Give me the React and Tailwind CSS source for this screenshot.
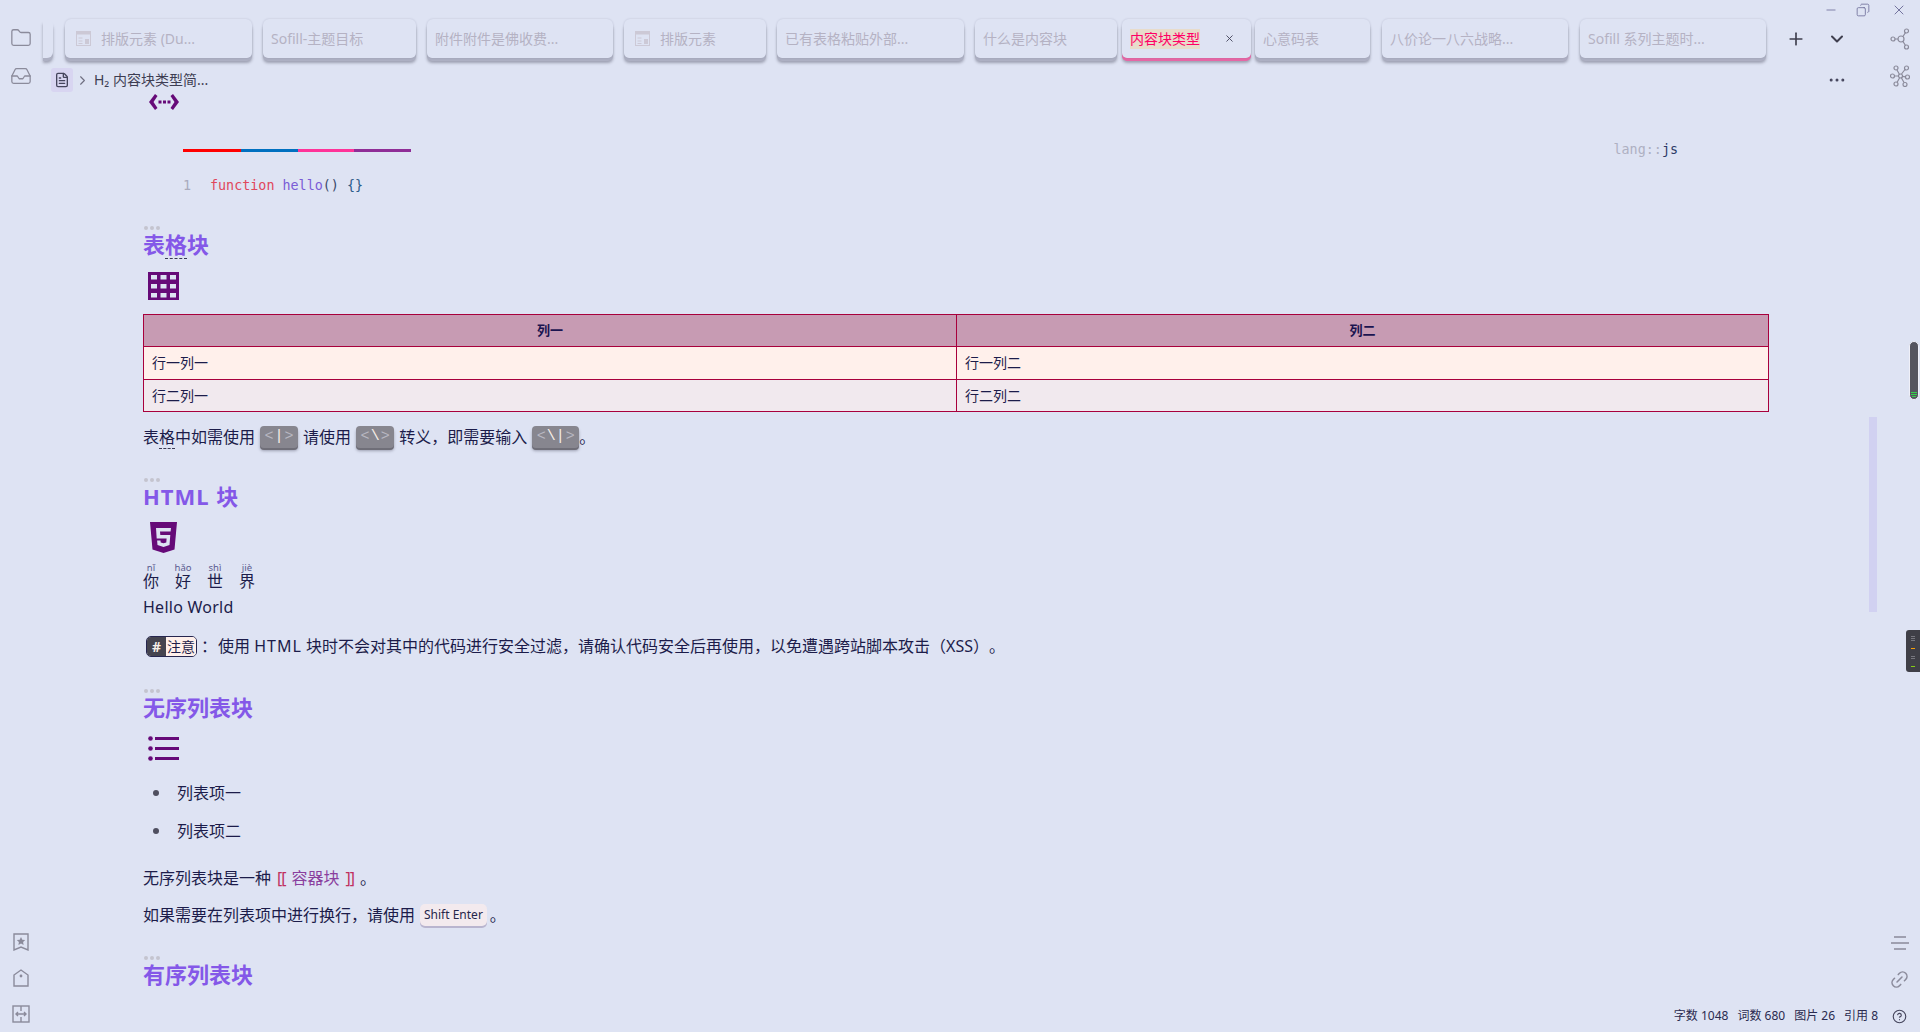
import { Folder, Inbox, FileText, ChevronRight, ChevronDown, Plus, Minus, X, Ellipsis, Link2, CircleHelp, Copy } from 'lucide-react'

const tabs = [
  { title: '排版元素 (Du...', w: 'w-[187px]', doc: true },
  { title: 'Sofill-主题目标', w: 'w-[153px]' },
  { title: '附件附件是佛收费...', w: 'w-[186px]' },
  { title: '排版元素', w: 'w-[142px]', doc: true },
  { title: '已有表格粘贴外部...', w: 'w-[187px]' },
  { title: '什么是内容块', w: 'w-[142px]' },
]

const tabsAfter = [
  { title: '八价论一八六战略...', w: 'w-[186px]' },
  { title: 'Sofill 系列主题时...', w: 'w-[186px]' },
]

const tabCls = 'h-[39px] shrink-0 flex items-center rounded-t-[6px] rounded-b-[5px] bg-[#dee3f3] shadow-[0_0_2px_rgba(90,90,120,0.25),0_3px_0_#adb0c3,0_5px_3px_rgba(60,60,80,0.4)] text-[14px] text-[#b5b2c3]'

function DocTabIcon() {
  return (
    <svg width="15" height="15" viewBox="0 0 15 15" className="shrink-0 mr-[10px]">
      <rect x="0.5" y="0.5" width="14" height="14" fill="none" stroke="#ccc9d6" />
      <rect x="0.5" y="0.5" width="14" height="3" fill="#ccc9d6" />
      <rect x="9" y="8" width="4" height="5" fill="#ccc9d6" />
      <path d="M2.5 7h4M2.5 10h4M2.5 12.5h4" stroke="#ccc9d6" />
    </svg>
  )
}

function Tab({ title, w, doc }) {
  return (
    <div className={`${tabCls} ${w} ${doc ? 'pl-[11px]' : 'pl-[8px]'}`}>
      {doc && <DocTabIcon />}
      <span className="truncate">{title}</span>
    </div>
  )
}

function GraphIcon() {
  return (
    <svg width="20" height="22" viewBox="0 0 20 22" fill="none" stroke="#8b8b9b" strokeWidth="1.2">
      <circle cx="3" cy="11" r="2" />
      <circle cx="16.5" cy="3" r="2" />
      <circle cx="16.5" cy="19" r="2" />
      <circle cx="11" cy="11" r="3" />
      <path d="M5 11h3M13 8.5l2.5-4M13 13.5l2.5 4" />
    </svg>
  )
}

function NetworkIcon() {
  return (
    <svg width="20" height="22" viewBox="0 0 20 22" fill="none" stroke="#8b8b9b" strokeWidth="1.2">
      <circle cx="2.5" cy="11" r="2" />
      <circle cx="6" cy="3" r="2" />
      <circle cx="16.5" cy="3" r="2" />
      <circle cx="17.5" cy="12" r="2" />
      <circle cx="6" cy="19" r="2" />
      <circle cx="15" cy="19.5" r="2" />
      <circle cx="10.5" cy="11" r="2" />
      <path d="M4.5 11h4M7 5l2.5 4.500M15 4.500l-3.500 4.500M15.500 11.800l-3-.5M7 17.500l2.500-4.500M14 17.500l-2.500-4.500" />
    </svg>
  )
}

function BookmarkStar() {
  return (
    <svg width="16" height="18" viewBox="0 0 16 18" fill="none" stroke="#8b8b9b" strokeWidth="1.4">
      <path d="M1 1h14v16l-7-3-7 3z" />
      <path d="M8 4l1.300 2.700 2.900.4-2.100 2 .5 2.900L8 10.600 5.400 12l.5-2.900-2.100-2 2.900-.4z" fill="#8b8b9b" stroke="none" />
    </svg>
  )
}

function TagIcon() {
  return (
    <svg width="16" height="18" viewBox="0 0 16 18" fill="none" stroke="#8b8b9b" strokeWidth="1.4">
      <path d="M1 6l7-5 7 5v11H1z" />
      <circle cx="8" cy="7" r="1.400" fill="#8b8b9b" stroke="none" />
    </svg>
  )
}

function SplitIcon() {
  return (
    <svg width="18" height="18" viewBox="0 0 18 18" fill="none" stroke="#8b8b9b" strokeWidth="1.4">
      <rect x="1" y="1" width="16" height="16" />
      <path d="M9 1v5M9 12v5M4 9h10M6 7L4 9l2 2M12 7l2 2-2 2" />
    </svg>
  )
}

function LinesIcon() {
  return (
    <svg width="18" height="14" viewBox="0 0 18 14" stroke="#8b8b9b" strokeWidth="1.6">
      <path d="M3 1h12M0 7h18M3 13h12" />
    </svg>
  )
}

function CodeBlockIcon() {
  return (
    <svg width="32" height="20" viewBox="0 0 32 20" fill="#660a78">
      <path d="M7 2l2.500 2-4 6 4 6L7 18 1 10zM25 2l-2.500 2 4 6-4 6 2.500 2 6-8z" />
      <rect x="10.500" y="8.500" width="3" height="3" />
      <rect x="15" y="8.500" width="3" height="3" />
      <rect x="19.500" y="8.500" width="3" height="3" />
    </svg>
  )
}

function TableIcon() {
  return (
    <svg width="31" height="28" viewBox="0 0 31 28">
      <rect width="31" height="28" fill="#660a78" />
      {[3, 12, 21].map((y) =>
        [3, 12.500, 22].map((x) => <rect key={`${x}-${y}`} x={x} y={y} width="6" height="4.500" fill="#dee3f3" />)
      )}
    </svg>
  )
}

function Html5Icon() {
  return (
    <svg width="27" height="31" viewBox="0 0 27 31">
      <path d="M0 0H27L24.500 27.500 13.500 31 2.500 27.500Z" fill="#660a78" />
      <path d="M6 6H21L20.600 9.500H10L10.300 13H20.300L19.500 23 13.500 25 7.500 23 7.100 18.500H10.500L10.700 20.500 13.500 21.300 16.300 20.500 16.600 16.500H6.700Z" fill="#dee3f3" />
    </svg>
  )
}

function ListIcon() {
  return (
    <svg width="31" height="25" viewBox="0 0 31 25" fill="#660a78">
      {[2.500, 12.500, 22.500].map((y) => (
        <g key={y}>
          <circle cx="2.500" cy={y} r="2.300" />
          <rect x="7" y={y - 1.500} width="24" height="3" />
        </g>
      ))}
    </svg>
  )
}

function Dots() {
  return (
    <div className="absolute left-[1px] top-[-3px] flex gap-[2px]">
      <span className="w-[4px] h-[4px] rounded-full bg-[#c4c4cf]" />
      <span className="w-[4px] h-[4px] rounded-full bg-[#c4c4cf]" />
      <span className="w-[4px] h-[4px] rounded-full bg-[#c4c4cf]" />
    </div>
  )
}

function Heading({ children, className }) {
  return (
    <h2 className={`relative h-[32px] pb-[2px] flex items-center text-[22px] leading-[30px] font-bold text-[#8458e8] ${className}`}>
      <Dots />
      <span>{children}</span>
    </h2>
  )
}

function Kbd({ children }) {
  return (
    <span className="inline-flex items-center h-[22px] mx-[5px] px-[4.500px] gap-[1px] rounded-[4px] bg-[#87868f] shadow-[0_2px_0_#6f6e78,0_3px_3px_rgba(60,60,80,0.4)] text-[15px] text-[#b9b8c2] font-['Liberation_Mono',monospace]">
      {children}
    </span>
  )
}

const Light = ({ children }) => <span className="text-[#f7efe8]">{children}</span>

const Dash = ({ children }) => (
  <span className="underline decoration-dashed decoration-[#3a3a55] decoration-1 underline-offset-[5px]">{children}</span>
)

function Pinyin({ han, py }) {
  return (
    <span className="relative w-[16px] mr-[16px] text-center">
      <span className="absolute left-[-8px] right-[-8px] top-[-10px] text-[9.500px] leading-[10px] text-[#5a5a90]">{py}</span>
      {han}
    </span>
  )
}

const headerCell = 'flex items-center justify-center font-bold text-[13px] text-[#1b1450]'
const bodyCell = 'flex items-center pl-[8px] pb-[1px]'

export default function App() {
  return (
    <div className="relative h-[1032px] w-full overflow-hidden flex bg-[#dee3f3] text-[16px] text-[#1c1c4a] [text-spacing-trim:space-all] font-['Noto_Sans','Noto_Sans_CJK_SC',sans-serif]">
      {/* Left dock */}
      <aside className="w-[43px] shrink-0 flex flex-col justify-between items-center pr-[2px] pt-[27px] pb-[9px] text-[#8b8b9b]">
        <div className="flex flex-col items-center gap-[16px]">
          <Folder size={22} strokeWidth={1.4} />
          <Inbox size={22} strokeWidth={1.4} />
        </div>
        <div className="flex flex-col items-center gap-[18px]">
          <BookmarkStar />
          <TagIcon />
          <SplitIcon />
        </div>
      </aside>

      {/* Main column */}
      <main className="flex-1 min-w-0 flex flex-col">
        <div className="h-[68px] shrink-0 flex items-start pt-[19px]">
          <div className="w-[10px] h-[39px] shrink-0 rounded-r-[6px] bg-[#dee3f3] shadow-[0_3px_0_#adb0c3,0_5px_3px_rgba(60,60,80,0.4)]" />
          <div className="flex gap-[11px] ml-[12px]">
            {tabs.map((t) => <Tab key={t.title + t.w} {...t} />)}
          </div>
          <div className={`${tabCls} ml-[5px] w-[129px] pl-[8px] pr-[16px] justify-between shadow-[0_0_2px_rgba(90,90,120,0.25),0_3px_0_#e667a5,0_5px_3px_rgba(60,60,80,0.4)]`}>
            <span className="bg-[#e8dccb] text-[#ff0066] leading-[20px]">内容块类型</span>
            <X size={11} strokeWidth={2} className="text-[#45455c]" />
          </div>
          <div className={`${tabCls} ml-[4px] w-[115px] pl-[8px]`}>心意码表</div>
          <div className="flex gap-[12px] ml-[12px]">
            {tabsAfter.map((t) => <Tab key={t.title} {...t} />)}
          </div>
          <div className="flex items-center h-[39px] ml-[20px] gap-[21px] text-[#3f3f4e]">
            <Plus size={20} strokeWidth={2} />
            <ChevronDown size={20} strokeWidth={2.4} />
          </div>
        </div>

        <div className="h-[24px] shrink-0 flex items-center pl-[8px]">
          <div className="w-[22px] h-[24px] flex items-center justify-center rounded-[3px] bg-[#d8d5f1]">
            <FileText size={16} strokeWidth={2} className="text-[#45455c]" />
          </div>
          <ChevronRight size={15} strokeWidth={1.8} className="ml-[2px] text-[#6f6f80]" />
          <span className="ml-[4px] text-[14px] leading-[20px] text-[#3d3d52]">H₂ 内容块类型简...</span>
          <Ellipsis size={20} strokeWidth={1.6} className="ml-auto mr-[32px] text-[#45455c]" />
        </div>

        {/* Document */}
        <div className="flex-1 min-h-0 overflow-hidden pl-[100px] w-[1726px]">
          <div className="h-[20px] pl-[5px]"><CodeBlockIcon /></div>

          <div className="mt-[28px] h-[20px] flex items-center justify-between pl-[40px] pr-[91px]">
            <div className="flex h-[3px] w-[228px]">
              <span className="w-[58px] bg-[#ff0000]" />
              <span className="w-[57px] bg-[#0070c0]" />
              <span className="w-[56px] bg-[#ff3399]" />
              <span className="w-[57px] bg-[#8f2e97]" />
            </div>
            <span className="font-['DejaVu_Sans_Mono',monospace] text-[13.400px] text-[#aeb0c2]">lang::<span className="text-[#2a3a66]">js</span></span>
          </div>

          <div className="mt-[16px] h-[20px] flex items-center pl-[40px] font-['DejaVu_Sans_Mono',monospace] text-[13.400px]">
            <span className="w-[27px] text-[#a9abbd]">1</span>
            <span className="text-[#e0475c]">function</span>
            <span className="text-[#7a5cd6] ml-[8px]">hello</span>
            <span className="text-[#3a4a6b]">()</span>
            <span className="text-[#2d5a8a] ml-[8px]">{'{}'}</span>
          </div>

          <Heading className="mt-[33px]">表<Dash>格</Dash>块</Heading>
          <div className="mt-[11px] h-[28px] pl-[5px]"><TableIcon /></div>

          <div className="mt-[14px] w-[1626px] h-[98px] grid grid-cols-[813px_811px] grid-rows-[32px_33px_31px] border border-[#a8003c] text-[14px]">
            <div className={`${headerCell} bg-[#c79bb3] border-r border-b border-[#a8003c]`}>列一</div>
            <div className={`${headerCell} bg-[#c79bb3] border-b border-[#a8003c]`}>列二</div>
            <div className={`${bodyCell} bg-[#fff0eb] border-r border-b border-[#a8003c]`}>行一列一</div>
            <div className={`${bodyCell} bg-[#fff0eb] border-b border-[#a8003c]`}>行一列二</div>
            <div className={`${bodyCell} bg-[#f1e9ee] border-r border-[#a8003c]`}>行二列一</div>
            <div className={`${bodyCell} bg-[#f1e9ee]`}>行二列二</div>
          </div>

          <p className="mt-[9px] h-[32px] flex items-center">
            <span>表<Dash>格</Dash>中如需使用</span>
            <Kbd>&lt;<Light>|</Light>&gt;</Kbd>
            <span>请使用</span>
            <Kbd>&lt;<Light>\</Light>&gt;</Kbd>
            <span>转义，即需要输入</span>
            <Kbd>&lt;<Light>\|</Light>&gt;</Kbd>
            <span className="-ml-[5px]">。</span>
          </p>

          <Heading className="mt-[28px] tracking-[1px]">HTML 块</Heading>
          <div className="mt-[9px] h-[31px] pl-[7px]"><Html5Icon /></div>

          <div className="mt-[9px] h-[34px] pt-[11px] flex items-start leading-[16px]">
            <Pinyin han="你" py="nǐ" />
            <Pinyin han="好" py="hǎo" />
            <Pinyin han="世" py="shì" />
            <Pinyin han="界" py="jiè" />
          </div>
          <div className="h-[22px] flex items-center tracking-[0.25px]">Hello World</div>

          <p className="mt-[12px] h-[32px] flex items-center">
            <span className="ml-[3px] flex items-center h-[21px] rounded-[5px] border border-[#26264f] overflow-hidden text-[14px]">
              <span className="w-[19px] h-full flex items-center justify-center bg-[#45444f] text-[#f7efe8] font-bold">#</span>
              <span className="h-full px-[1px] flex items-center bg-[#fff0eb]">注意</span>
            </span>
            <span className="ml-[4px]">：</span>
            <span className="ml-[1px]">使用 <span className="tracking-[1px]">HTML</span> 块时不会对其中的代码进行安全过滤，请确认代码安全后再使用，以免遭遇跨站脚本攻击（XSS）。</span>
          </p>

          <Heading className="mt-[30px]">无序列表块</Heading>
          <div className="mt-[12px] h-[25px] pl-[5px]"><ListIcon /></div>

          <ul className="mt-[16px] flex flex-col gap-[6px]">
            {['列表项一', '列表项二'].map((item) => (
              <li key={item} className="h-[32px] flex items-center pl-[10px]">
                <span className="w-[6px] h-[6px] rounded-full bg-[#4f4f5f] mr-[18px]" />
                {item}
              </li>
            ))}
          </ul>

          <p className="mt-[15px] h-[32px] flex items-center">
            无序列表块是一种
            <span className="ml-[6px] text-[#c0305f] tracking-[-1px]">[[</span>
            <span className="ml-[6px] text-[#8a3f9e]">容器块</span>
            <span className="ml-[6px] text-[#c0305f] tracking-[-1px]">]]</span>
            <span className="ml-[6px]">。</span>
          </p>
          <p className="mt-[5px] h-[32px] flex items-center">
            如果需要在列表项中进行换行，请使用
            <span className="ml-[5px] h-[22px] px-[4px] flex items-center rounded-[5px] bg-[#f3eaee] shadow-[0_2px_0_#b9b5cf] text-[12px] text-[#26264a]">Shift Enter</span>
            <span className="ml-[3px]">。</span>
          </p>

          <Heading className="mt-[28px]">有序列表块</Heading>
        </div>
      </main>

      {/* Right dock */}
      <aside className="w-[41px] shrink-0 flex flex-col justify-between items-center pt-[28px] pb-[8px] text-[#8b8b9b]">
        <div className="flex flex-col items-center gap-[15px]">
          <GraphIcon />
          <NetworkIcon />
        </div>
        <div className="flex flex-col items-center gap-[19px]">
          <LinesIcon />
          <Link2 size={21} strokeWidth={1.8} className="-rotate-45" />
          <CircleHelp size={15} strokeWidth={1.8} className="text-[#45455c]" />
        </div>
      </aside>

      {/* Window controls */}
      <div className="absolute top-[2px] right-[13px] flex items-center gap-[18px] text-[#6c6c98]">
        <Minus size={14} strokeWidth={1.4} />
        <Copy size={14} strokeWidth={1.4} className="scale-x-[-1]" />
        <X size={16} strokeWidth={1.4} className="ml-[3px]" />
      </div>

      {/* Status bar */}
      <div className="absolute right-[42px] bottom-[7px] flex gap-[9px] text-[12px] leading-[18px] text-[#2a2a4f]">
        <span>字数 1048</span>
        <span>词数 680</span>
        <span>图片 26</span>
        <span>引用 8</span>
      </div>

      {/* Scroll widgets */}
      <div className="absolute left-[1869px] top-[417px] w-[8px] h-[195px] bg-[#d1d1f1]" />
      <div className="absolute left-[1909px] top-[341px] w-[10px] h-[59px] rounded-[5px] border border-[#f0f0f8] bg-[#55555f] flex flex-col items-center justify-end gap-[1px] pb-[2px]">
        <span className="w-[6px] h-[1px] bg-[#35d24a]" />
        <span className="w-[6px] h-[1px] bg-[#35d24a]" />
        <span className="w-[4px] h-[1px] bg-[#35d24a]" />
      </div>
      <div className="absolute left-[1906px] top-[630px] w-[14px] h-[42px] rounded-l-[3px] bg-[#3f3f47] flex flex-col items-center pt-[6px] gap-[1px]">
        <span className="w-[4px] h-[1px] bg-[#77777f]" />
        <span className="w-[4px] h-[1px] bg-[#77777f]" />
        <span className="w-[4px] h-[1px] bg-[#77777f]" />
        <span className="w-[4px] h-[1px] bg-[#f59e0b] mt-[6px]" />
        <span className="w-[4px] h-[1px] bg-[#77777f] mt-[6px]" />
        <span className="w-[4px] h-[1px] bg-[#77777f]" />
        <span className="w-[4px] h-[1px] bg-[#84cc16] mt-[6px]" />
      </div>
    </div>
  )
}
